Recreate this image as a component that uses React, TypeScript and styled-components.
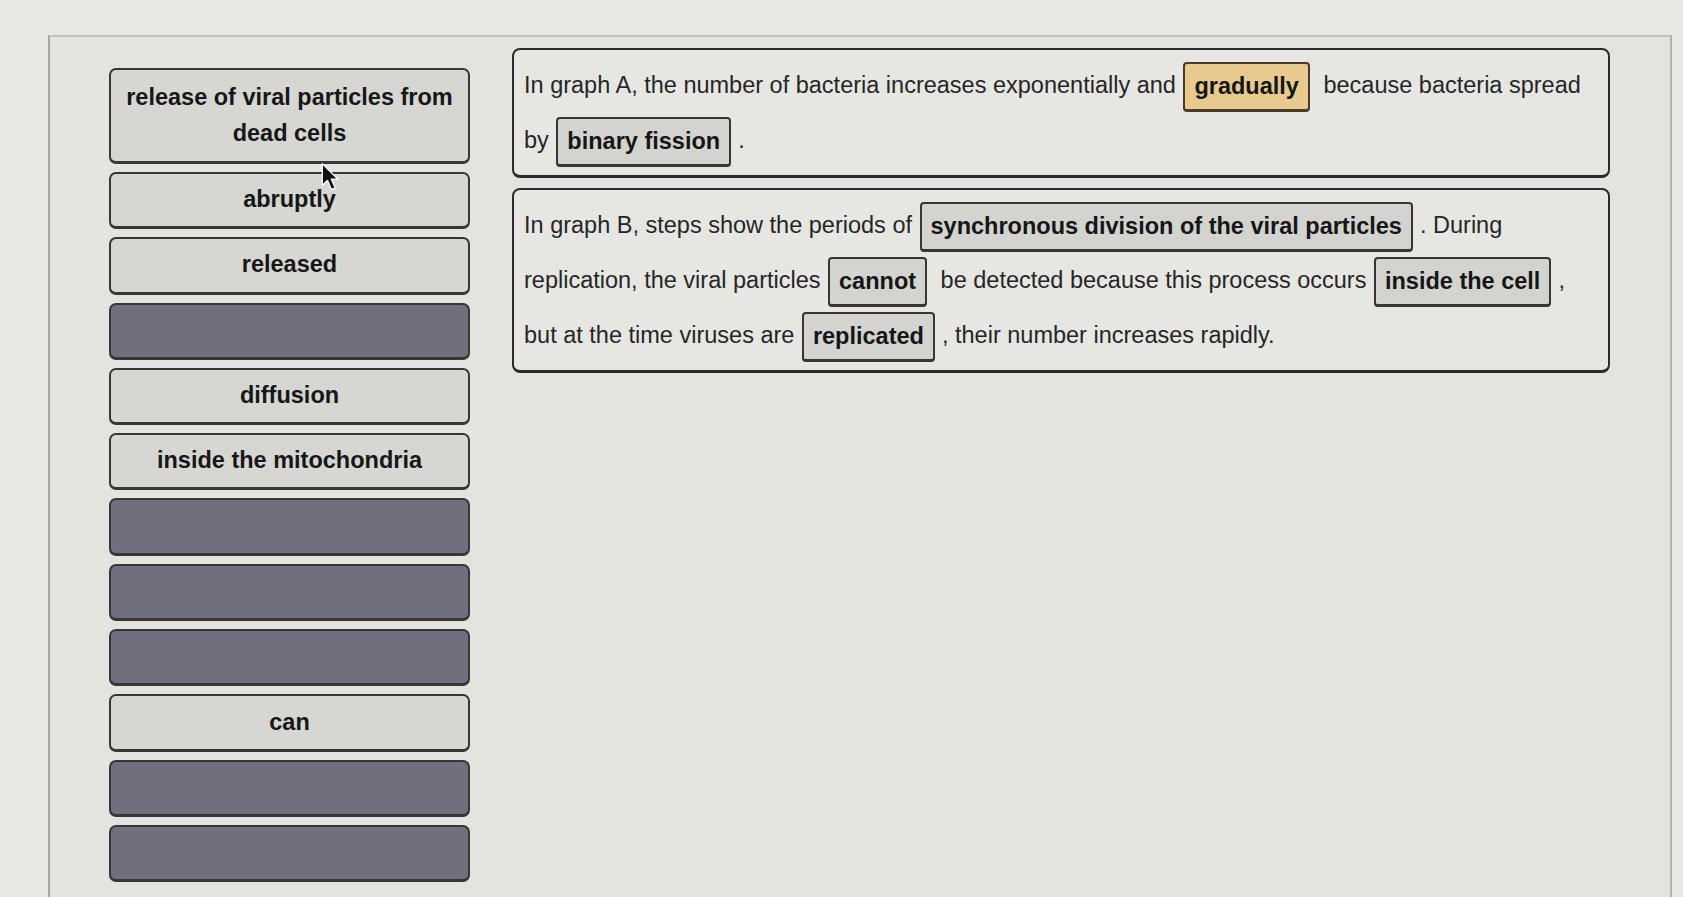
import styled, { createGlobalStyle } from "styled-components";

const GlobalStyle = createGlobalStyle`
  html, body {
    margin: 0;
    padding: 0;
  }
  body {
    background: #e7e7e4;
    font-family: "Liberation Sans", Arial, sans-serif;
    color: #222;
    overflow: hidden;
  }
`;

const Page = styled.div`
  position: relative;
  height: 897px;
  padding: 35px 0 0 48px;
  box-sizing: border-box;
`;

const Frame = styled.div`
  width: 1624px;
  height: 100%;
  box-sizing: border-box;
  border-top: 2px solid #c4c4c1;
  border-left: 2px solid #a3a3a0;
  border-right: 2px solid #b3b3b0;
  background: #e3e3e0;
  display: flex;
  align-items: flex-start;
  gap: 42px;
  padding-left: 59px;
`;

const WordBank = styled.div`
  width: 361px;
  margin-top: 31px;
  display: flex;
  flex-direction: column;
  gap: 8px;
`;

const Card = styled.div<{ $filled: boolean; $tall?: boolean }>`
  box-sizing: border-box;
  height: ${(p) => (p.$tall ? 96 : 57.3)}px;
  border: 2px solid #3b3536;
  border-bottom-width: 3px;
  border-radius: 7px;
  background: ${(p) => (p.$filled ? "#d6d6d3" : "#6f6f7e")};
  display: flex;
  align-items: center;
  justify-content: center;
  text-align: center;
  padding: 0 8px 2px;
  font-size: 23.5px;
  font-weight: 700;
  line-height: 36px;
  color: #171717;
`;

const Sentences = styled.div`
  width: 1098px;
  margin-top: 11px;
  display: flex;
  flex-direction: column;
  gap: 10px;
`;

const SentenceBox = styled.div`
  box-sizing: border-box;
  border: 2px solid #2e2a2b;
  border-bottom-width: 3px;
  border-radius: 8px;
  padding: 8px 10px 7px;
  background: #e6e6e3;
`;

const Line = styled.div`
  height: 55px;
  line-height: 55px;
  white-space: nowrap;
  font-size: 23.5px;
  color: #262626;
`;

const Blank = styled.span<{ $amber?: boolean }>`
  display: inline-block;
  box-sizing: border-box;
  height: 50px;
  line-height: 45px;
  padding: 0 9px;
  margin: 0 7px 0 1px;
  vertical-align: middle;
  border: 2px solid ${(p) => (p.$amber ? "#4a3a2c" : "#3a3434")};
  border-bottom-width: 3px;
  border-radius: 4px;
  background: ${(p) => (p.$amber ? "#e8c98f" : "#d3d3d0")};
  font-weight: 700;
  color: #161616;
`;

const Cursor = styled.svg`
  position: absolute;
  left: 321px;
  top: 162px;
  width: 18px;
  height: 29px;
`;

const bank: { text?: string; tall?: boolean }[] = [
  { text: "release of viral particles from dead cells", tall: true },
  { text: "abruptly" },
  { text: "released" },
  {},
  { text: "diffusion" },
  { text: "inside the mitochondria" },
  {},
  {},
  {},
  { text: "can" },
  {},
  {},
];

export default function App() {
  return (
    <>
      <GlobalStyle />
      <Page>
        <Frame>
          <WordBank>
            {bank.map((item, i) => (
              <Card key={i} $filled={!!item.text} $tall={item.tall}>
                {item.text}
              </Card>
            ))}
          </WordBank>

          <Sentences>
            <SentenceBox>
              <Line>
                In graph A, the number of bacteria increases exponentially and{" "}
                <Blank $amber>gradually</Blank> because bacteria spread
              </Line>
              <Line>
                by <Blank>binary fission</Blank>.
              </Line>
            </SentenceBox>

            <SentenceBox>
              <Line>
                In graph B, steps show the periods of{" "}
                <Blank>synchronous division of the viral particles</Blank>. During
              </Line>
              <Line>
                replication, the viral particles <Blank>cannot</Blank> be detected
                because this process occurs <Blank>inside the cell</Blank>,
              </Line>
              <Line>
                but at the time viruses are <Blank>replicated</Blank>, their number
                increases rapidly.
              </Line>
            </SentenceBox>
          </Sentences>
        </Frame>

        <Cursor viewBox="0 0 14 22">
          <path
            d="M1 1 L1 18 L5 14 L8 21 L11 20 L8 13 L13 13 Z"
            fill="#111"
            stroke="#fff"
            strokeWidth="1"
            strokeLinejoin="round"
          />
        </Cursor>
      </Page>
    </>
  );
}
